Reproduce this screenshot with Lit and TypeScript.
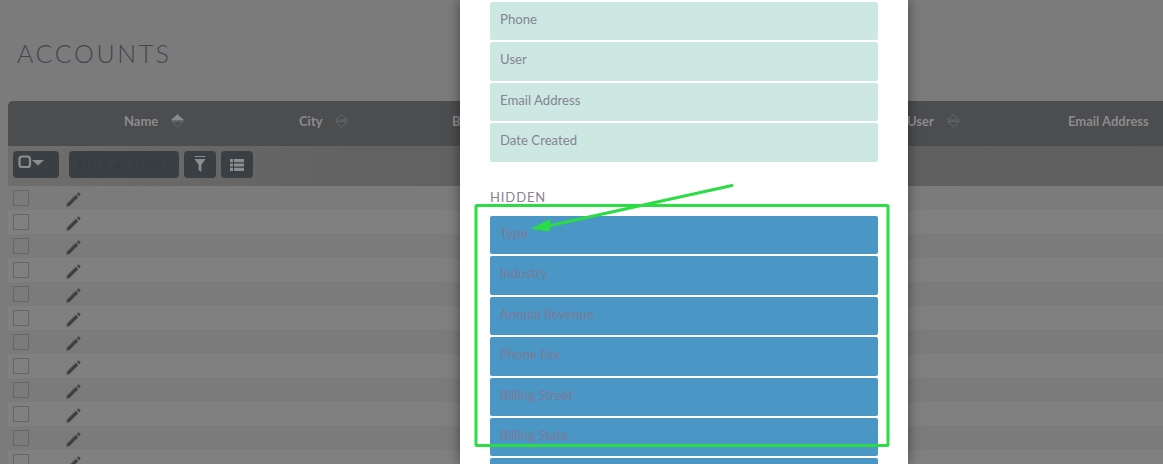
import { LitElement, html, css, svg } from "lit";
import { customElement } from "lit/decorators.js";

const sortIcon = (active: boolean) => html`<svg class="sort" width="13" height="14" viewBox="0 0 13 14">
  <path d="M6.5 0.5 L12.5 6 H0.5 Z" fill=${active ? "#8a8a8a" : "none"} stroke=${active ? "#8a8a8a" : "#6d6e70"} stroke-width="0.8"></path>
  <path d="M0.8 7.6 H12.2 L6.5 13.2 Z" fill="none" stroke="#6d6e70" stroke-width="0.8"></path>
</svg>`;

const pencil = html`<svg class="pencil" width="15" height="15" viewBox="0 0 15 15">
  <path d="M0.3 14.7 L1.1 11.4 L9.8 2.7 L12.3 5.2 L3.6 13.9 Z" fill="#3f4146"></path>
  <path d="M10.7 1.8 L11.8 0.7 Q12.4 0.2 13 0.7 L14.3 2 Q14.8 2.6 14.3 3.2 L13.2 4.3 Z" fill="#3f4146"></path>
</svg>`;

@customElement("app-root")
export class AppRoot extends LitElement {
  static styles = css`
    :host { display: block; width: 1163px; height: 464px; overflow: hidden; position: relative;
      background: #7b7b7b; font-family: Lato, "Liberation Sans", sans-serif; }
    .page { padding: 0 0 0 8px; }
    h1 { margin: 0; padding: 40px 0 0 9px; height: 101px; box-sizing: border-box; font-weight: 300; font-size: 25px;
      line-height: 27px; letter-spacing: 2.6px; color: #43464e; }
    .head { height: 45px; padding-bottom: 5px; box-sizing: border-box; background: #4c4d4f; border-radius: 5px 0 0 0; display: flex; align-items: center;
      font-weight: 700; font-size: 13px; color: #8b8b8b; white-space: nowrap; }
    .col { display: flex; align-items: center; gap: 13px; }
    .c1 { margin-left: 116px; width: 175px; gap: 13px; }
    .c2 { width: 153px; gap: 12px; }
    .c3 { width: 448px; }
    .c4 { width: 161px; gap: 13px; margin-left: 7px; }
    .sort { display: block; margin-top: -1px; }
    .tools { height: 40px; background: linear-gradient(90deg, #6e6e6e 0, #626262 30%, #5f5f5f 100%); display: flex;
      align-items: flex-start; padding: 5px 0 0 5px; box-sizing: border-box; }
    .btn { background: #3a3f43; border-radius: 4px; height: 27px; display: flex; align-items: center; justify-content: center; box-sizing: border-box; }
    .b1 { width: 46px; margin-right: 10px; justify-content: flex-start; padding: 0 0 5px 5px; }
    .b2 { width: 110px; margin-right: 5px; font-size: 10.5px; font-weight: 700; letter-spacing: 1.5px; color: #363b41; gap: 2px; }
    .b3 { width: 32px; margin-right: 5px; }
    .row { height: 24px; display: flex; align-items: center; padding-left: 5px; box-sizing: border-box; }
    .row.alt { background: #808080; }
    .check { width: 16px; height: 16px; box-sizing: border-box; border: 1px solid #656668; margin-right: 37px; }
    .pencil { margin-top: 2px; }
    .modal { position: absolute; left: 460px; top: 0; width: 448px; height: 464px; box-sizing: border-box; background: #fff;
      padding: 1.85px 30px 0; box-shadow: 0 0 12px rgba(0,0,0,.45); }
    .list { display: flex; flex-direction: column; gap: 1.97px; }
    .item { height: 38.45px; flex: none; box-sizing: border-box; padding: 8px 10px 0; border-radius: 2px; font-size: 13.2px; line-height: 19px; }
    .shown .item { background: #cde8e3; color: #85848f; }
    .hidden .item { background: #4a96c4; color: #7e7a97; }
    h2 { margin: 0; height: 54.44px; box-sizing: border-box; padding-top: 27.5px; font-size: 13px; line-height: 17px; font-weight: 400;
      letter-spacing: 0.9px; color: #85848f; }
    .note { position: absolute; left: 0; top: 0; pointer-events: none; }
  `;

  render() {
    const shown = ["Phone", "User", "Email Address", "Date Created"];
    const hidden = ["Type", "Industry", "Annual Revenue", "Phone Fax", "Billing Street", "Billing State", ""];
    const rows = Array.from({ length: 12 }, (_, i) => i);
    return html`
      <div class="page">
        <h1>ACCOUNTS</h1>
        <div class="head">
          <div class="col c1"><span>Name</span>${sortIcon(true)}</div>
          <div class="col c2"><span>City</span>${sortIcon(false)}</div>
          <div class="col c3"><span>Billing State</span></div>
          <div class="col c4"><span>User</span>${sortIcon(false)}</div>
          <div class="col"><span>Email Address</span></div>
        </div>
        <div class="tools">
          <div class="btn b1">
            <svg width="28" height="14" viewBox="0 0 28 14"><rect x="1.5" y="1.5" width="10.5" height="10.5" rx="2.6" fill="none" stroke="#8c8d8e" stroke-width="2.2"></rect><path d="M14 5 H26 L20 10.5 Z" fill="#8c8d8e"></path></svg>
          </div>
          <div class="btn b2">BULK ACTION<svg width="6" height="4" viewBox="0 0 6 4"><path d="M0.5 0.5 L3 3 L5.5 0.5" fill="none" stroke="#363b41" stroke-width="1.2"></path></svg></div>
          <div class="btn b3">
            <svg width="12" height="17" viewBox="0 0 12 17"><path d="M0.5 0 H11.5 V1 H0.5 Z M0.5 3 H11.5 L7.4 8.8 V16 L4.6 14 V8.8 Z" fill="#8c8d8e"></path></svg>
          </div>
          <div class="btn b3">
            <svg width="14" height="12" viewBox="0 0 14 12"><path d="M0 0 H3 V3.2 H0 Z M4 0 H14 V3.2 H4 Z M0 4.4 H3 V7.6 H0 Z M4 4.4 H14 V7.6 H4 Z M0 8.8 H3 V12 H0 Z M4 8.8 H14 V12 H4 Z" fill="#8c8d8e"></path></svg>
          </div>
        </div>
        ${rows.map((i) => html`<div class="row ${i % 2 ? "alt" : ""}"><span class="check"></span>${pencil}</div>`)}
      </div>
      <div class="modal">
        <div class="list shown">${shown.map((t) => html`<div class="item">${t}</div>`)}</div>
        <h2>HIDDEN</h2>
        <div class="list hidden">${hidden.map((t) => html`<div class="item">${t}</div>`)}</div>
      </div>
      <svg class="note" width="1163" height="464" viewBox="0 0 1163 464">
        ${svg`<rect x="476" y="205.5" width="412" height="240" fill="none" stroke="#2bdc45" stroke-width="3" rx="1"></rect>
        <path d="M732 185.5 L548 226" stroke="#2bdc45" stroke-width="3" stroke-linecap="round" fill="none"></path>
        <path d="M532 228.5 L550 219.5 L549 231 Z" fill="#2bdc45" stroke="#2bdc45" stroke-width="1"></path>`}
      </svg>
    `;
  }
}
